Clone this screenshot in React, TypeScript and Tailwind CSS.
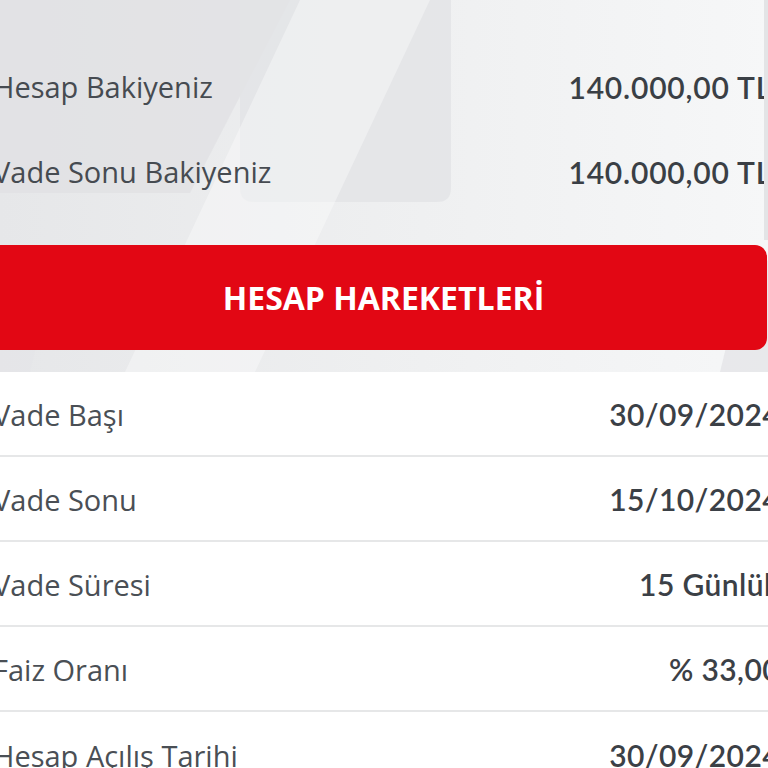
import React from 'react';

const balances = [
  { label: 'Hesap Bakiyeniz', value: '140.000,00 TL' },
  { label: 'Vade Sonu Bakiyeniz', value: '140.000,00 TL' },
];

const details = [
  { label: 'Vade Başı', value: '30/09/2024' },
  { label: 'Vade Sonu', value: '15/10/2024' },
  { label: 'Vade Süresi', value: '15 Günlük' },
  { label: 'Faiz Oranı', value: '% 33,00' },
  { label: 'Hesap Açılış Tarihi', value: '30/09/2024' },
];

const labelFont = { fontFamily: '"Open Sans", Lato, sans-serif' };
const valueFont = { fontFamily: 'Lato, "Open Sans", sans-serif' };

const CardDecor: React.FC = () => (
  <svg className="absolute inset-0 w-full h-full" viewBox="0 0 768 372" preserveAspectRatio="none">
    <defs>
      <linearGradient id="bg" x1="0" y1="0" x2="1" y2="0">
        <stop offset="0" stopColor="#e6e7e9" />
        <stop offset="0.55" stopColor="#eff0f1" />
        <stop offset="1" stopColor="#f6f7f8" />
      </linearGradient>
    </defs>
    <rect width="768" height="372" fill="url(#bg)" />
    <path d="M0 0 H290 L190 193 H0 Z" fill="#dfe0e3" opacity="0.7" />
    <path d="M240 0 H451 V188 Q451 202 437 202 H254 Q240 202 240 188 Z" fill="#e2e3e6" opacity="0.8" />
    <path d="M300 0 H430 L255 372 H125 Z" fill="#ffffff" opacity="0.35" />
    <path d="M0 250 H60 L30 372 H0 Z" fill="#e4e5e7" opacity="0.6" />
    <path d="M740 290 L768 260 V372 H720 Z" fill="#dfe0e3" opacity="0.6" />
    <rect x="764" y="0" width="4" height="240" fill="#e3e4e6" />
  </svg>
);

const App: React.FC = () => {
  return (
    <div className="w-[768px] h-[768px] overflow-hidden bg-white" style={labelFont}>
      {/* Balance card */}
      <div className="relative h-[372px]">
        <CardDecor />
        <div className="relative w-[764px] overflow-hidden">
          <div className="ml-[-7px] w-[779px] pt-[66px] flex flex-col gap-[43px]">
            {balances.map((b) => (
              <div key={b.label} className="flex items-center justify-between h-[42px] text-[29px] text-[#464b51]">
                <span>{b.label}</span>
                <span className="font-semibold text-[30px] tracking-[0.8px] text-[#3a3f45]" style={valueFont}>
                  {b.value}
                </span>
              </div>
            ))}
          </div>
        </div>
        <div className="relative ml-[-20px] mt-[52px] w-[787px]">
          <button className="w-full h-[105px] rounded-[12px] bg-[#e20714] text-white text-[32px] font-bold">
            <span className="pl-[20px]">HESAP HAREKETLERİ</span>
          </button>
        </div>
      </div>

      {/* Details */}
      <div className="ml-[-7px] w-[787px]">
        {details.map((d, i) => (
          <div
            key={d.label}
            className={`flex items-center justify-between h-[85px] pt-[2px] text-[29px] text-[#4a4f55] ${
              i < details.length - 1 ? 'border-b-2 border-[#e6e7e8]' : ''
            }`}
          >
            <span>{d.label}</span>
            <span className="font-semibold text-[30px] tracking-[0.4px] text-[#3b4046]" style={valueFont}>
              {d.value}
            </span>
          </div>
        ))}
      </div>
    </div>
  );
};

export default App;
